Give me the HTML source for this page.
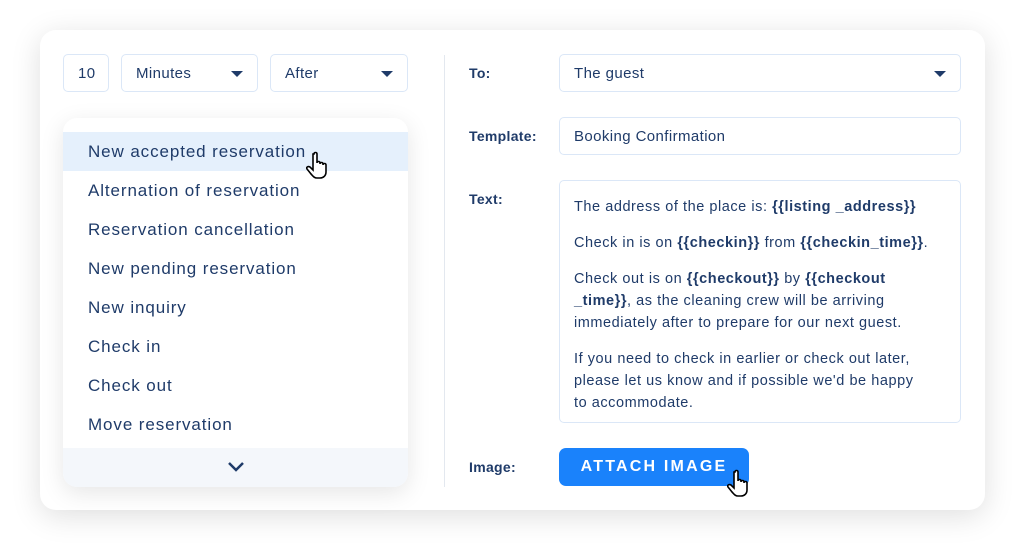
<!DOCTYPE html><html><head><style>
body{margin:0;width:1024px;height:560px;background:#fff;font-family:"Liberation Sans",sans-serif;color:#1f3b69;position:relative;overflow:hidden}
.card{position:absolute;left:40px;top:30px;width:945px;height:480px;background:#fff;border-radius:16px;box-shadow:0 6px 30px rgba(0,0,0,.13)}
.box{position:absolute;border:1.5px solid #dbe7f7;border-radius:5px;box-sizing:border-box;font-size:15px;letter-spacing:.4px;display:flex;align-items:center;padding-left:14px;background:#fff}
.tri{position:absolute;right:14px;top:16px;width:0;height:0;border-left:6px solid transparent;border-right:6px solid transparent;border-top:6px solid #1f3b69}
.dd{position:absolute;left:63px;top:118px;width:345px;height:369px;background:#fff;border-radius:14px;box-shadow:0 6px 24px rgba(0,0,0,.1);overflow:hidden}
.it{height:39px;line-height:39px;padding-left:25px;font-size:17px;letter-spacing:.9px}
.lab{position:absolute;left:469px;font-weight:bold;font-size:14px;letter-spacing:.3px}
.txt{position:absolute;left:559px;top:180px;width:402px;height:243px;border:1.5px solid #dbe7f7;border-radius:5px;box-sizing:border-box;padding:15px 20px 15px 14px;font-size:14.5px;line-height:22px;letter-spacing:.55px}
.txt p{margin:0 0 14px}
</style></head><body>
<div class="card"></div>
<div class="box" style="left:63px;top:54px;width:46px;height:38px">10</div>
<div class="box" style="left:121px;top:54px;width:137px;height:38px">Minutes<span class="tri"></span></div>
<div class="box" style="left:270px;top:54px;width:138px;height:38px">After<span class="tri"></span></div>
<div class="dd">
<div style="height:14px"></div>
<div class="it" style="background:#e5f0fc">New accepted reservation</div>
<div class="it">Alternation of reservation</div>
<div class="it">Reservation cancellation</div>
<div class="it">New pending reservation</div>
<div class="it">New inquiry</div>
<div class="it">Check in</div>
<div class="it">Check out</div>
<div class="it">Move reservation</div>
<div style="position:absolute;left:0;right:0;bottom:0;height:39px;background:#f4f7fb"><svg style="position:absolute;left:164px;top:13px" width="18" height="12" viewBox="0 0 18 12"><path d="M2 2l7 7 7-7" fill="none" stroke="#1f3b69" stroke-width="2.5"/></svg></div>
</div>
<svg style="position:absolute;left:306px;top:150px" width="28" height="30" viewBox="0 0 28 30"><path d="M8 4c0-2 3-2 3 0v9c0-2 3-2 3 0v1c0-2 3-2 3 0v1c0-2 3-2 3 0v7c0 4-3 6-6 6h-3c-3 0-4-2-6-4l-4-5c-1-2 1-3 3-2l3 3V4z" fill="#fff" stroke="#000" stroke-width="1.6"/></svg>
<div style="position:absolute;left:444px;top:55px;width:1px;height:432px;background:#e3e8ef"></div>
<div class="lab" style="top:65px">To:</div>
<div class="lab" style="top:128px">Template:</div>
<div class="lab" style="top:191px">Text:</div>
<div class="lab" style="top:459px">Image:</div>
<div class="box" style="left:559px;top:54px;width:402px;height:38px">The guest<span class="tri"></span></div>
<div class="box" style="left:559px;top:117px;width:402px;height:38px">Booking Confirmation</div>
<div class="txt">
<p>The address of the place is: <b>{{listing _address}}</b></p>
<p>Check in is on <b>{{checkin}}</b> from <b>{{checkin_time}}</b>.</p>
<p>Check out is on <b>{{checkout}}</b> by <b>{{checkout<br>_time}}</b>, as the cleaning crew will be arriving<br>immediately after to prepare for our next guest.</p>
<p>If you need to check in earlier or check out later,<br>please let us know and if possible we'd be happy<br>to accommodate.</p>
</div>
<div style="position:absolute;left:559px;top:448px;width:190px;height:38px;background:#1a82fb;border-radius:7px;color:#fff;font-weight:bold;font-size:16px;letter-spacing:2.2px;text-align:center;line-height:38px">ATTACH IMAGE</div>
<svg style="position:absolute;left:727px;top:468px" width="28" height="30" viewBox="0 0 28 30"><path d="M8 4c0-2 3-2 3 0v9c0-2 3-2 3 0v1c0-2 3-2 3 0v1c0-2 3-2 3 0v7c0 4-3 6-6 6h-3c-3 0-4-2-6-4l-4-5c-1-2 1-3 3-2l3 3V4z" fill="#fff" stroke="#000" stroke-width="1.6"/></svg>
</body></html>
